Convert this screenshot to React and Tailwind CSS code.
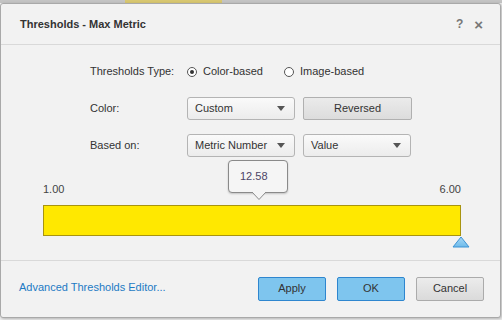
import React from 'react';

function Caret() {
  return (
    <svg width="8" height="5" viewBox="0 0 8 5" className="shrink-0">
      <path d="M0 0 L8 0 L4 5 Z" fill="#555" />
    </svg>
  );
}

function Dropdown({ label }) {
  return (
    <div className="w-[108px] h-[23px] flex items-center justify-between pl-[7px] pr-[9px] rounded-[3px] border border-[#b4b4b4] bg-gradient-to-b from-[#fafafa] to-[#ececec] text-[#333]">
      <span>{label}</span>
      <Caret />
    </div>
  );
}

function Radio({ checked, label }) {
  return (
    <div className="flex items-center gap-[6px]">
      <div className="w-[10px] h-[10px] rounded-full border border-[#555] bg-white flex items-center justify-center">
        {checked && <div className="w-[4px] h-[4px] rounded-full bg-[#333]" />}
      </div>
      <span>{label}</span>
    </div>
  );
}

function Row({ label, children }) {
  return (
    <div className="flex items-center h-[23px]">
      <div className="w-[97px]">{label}</div>
      <div className="flex items-center gap-[8px]">{children}</div>
    </div>
  );
}

export default function App() {
  return (
    <div className="w-[502px] h-[320px] bg-[#efefef] overflow-hidden flex flex-col [font-family:'Liberation_Sans',Arial,sans-serif] text-[11px] text-[#333]">
      {/* page behind the dialog */}
      <div className="h-[3px] flex bg-[#c4c4c4] shrink-0">
        <div className="w-[125px]" />
        <div className="w-[97px] bg-[#d8c770]" />
      </div>

      <div className="w-[501px] h-[315px] bg-[#f2f2f2] border border-[#a9a9a9] rounded-[3px] shadow-[1px_1px_3px_rgba(0,0,0,0.25)] flex flex-col">
        {/* header */}
        <div className="h-[41px] shrink-0 flex items-center justify-between pl-[19px] pr-[17px] border-b border-[#d9d9d9]">
          <span className="text-[11px] font-bold text-[#333]">Thresholds - Max Metric</span>
          <div className="flex items-center gap-[11px] text-[#777] font-bold text-[12px]">
            <span>?</span>
            <span className="text-[15px] leading-none">×</span>
          </div>
        </div>

        {/* body */}
        <div className="h-[216px] shrink-0 flex flex-col pt-[15px] pl-[89px] border-b border-[#d9d9d9]">
          <div className="flex flex-col gap-[14px]">
            <Row label="Thresholds Type:">
              <div className="flex items-center gap-[21px]">
                <Radio checked label="Color-based" />
                <Radio label="Image-based" />
              </div>
            </Row>
            <Row label="Color:">
              <Dropdown label="Custom" />
              <div className="w-[109px] h-[23px] flex items-center justify-center rounded-[2px] border border-[#b0b0b0] bg-gradient-to-b from-[#ebebeb] to-[#dcdcdc] text-[#333]">
                Reversed
              </div>
            </Row>
            <Row label="Based on:">
              <Dropdown label="Metric Number" />
              <div className="w-[109px]">
                <Dropdown label="Value" />
              </div>
            </Row>
          </div>

          {/* slider */}
          <div className="relative w-[418px] ml-[-47px] mt-[25px]">
            <div className="flex justify-between h-[14px] leading-[14px] text-[#444]">
              <span>1.00</span>
              <span>6.00</span>
            </div>
            <div className="mt-[9px] h-[31px] bg-[#ffe800] border border-[#a89410]" />
            <svg width="18" height="12" viewBox="0 0 18 12" className="absolute right-[-9px] top-[54px]">
              <defs>
                <linearGradient id="tri" x1="0" y1="0" x2="0" y2="1">
                  <stop offset="0" stopColor="#a6d8f6" />
                  <stop offset="1" stopColor="#6fbbea" />
                </linearGradient>
              </defs>
              <path d="M9 1 L17 11 L1 11 Z" fill="url(#tri)" stroke="#3d93d4" strokeWidth="1" strokeLinejoin="round" />
            </svg>
            <div className="absolute left-[185px] top-[-22px] w-[60px] h-[33px] rounded-[4px] border border-[#8a8a8a] bg-[#f5f5f5] shadow-[0_1px_2px_rgba(0,0,0,0.2)] pl-[11px] pt-[7px] text-[#4c4466]">
              12.58
              <svg width="14" height="9" viewBox="0 0 14 9" className="absolute left-[23px] top-[31px]">
                <path d="M0 0 L7 7.5 L14 0" fill="#f5f5f5" stroke="#8a8a8a" strokeWidth="1" />
              </svg>
            </div>
          </div>
        </div>

        {/* footer */}
        <div className="flex-1 flex items-center justify-between pl-[18px] pr-[16px] pb-[1px]">
          <span className="text-[#1d7ac4] mt-[-3px]">Advanced Thresholds Editor...</span>
          <div className="flex items-center gap-[11px]">
            <div className="w-[68px] h-[24px] flex items-center justify-center rounded-[2px] border border-[#2e86cf] bg-[#7ec5ee] text-[#333]">
              Apply
            </div>
            <div className="w-[68px] h-[24px] flex items-center justify-center rounded-[2px] border border-[#2e86cf] bg-[#7ec5ee] text-[#333]">
              OK
            </div>
            <div className="w-[68px] h-[24px] flex items-center justify-center rounded-[2px] border border-[#ababab] bg-gradient-to-b from-[#ececec] to-[#dadada] text-[#333]">
              Cancel
            </div>
          </div>
        </div>
      </div>
    </div>
  );
}
